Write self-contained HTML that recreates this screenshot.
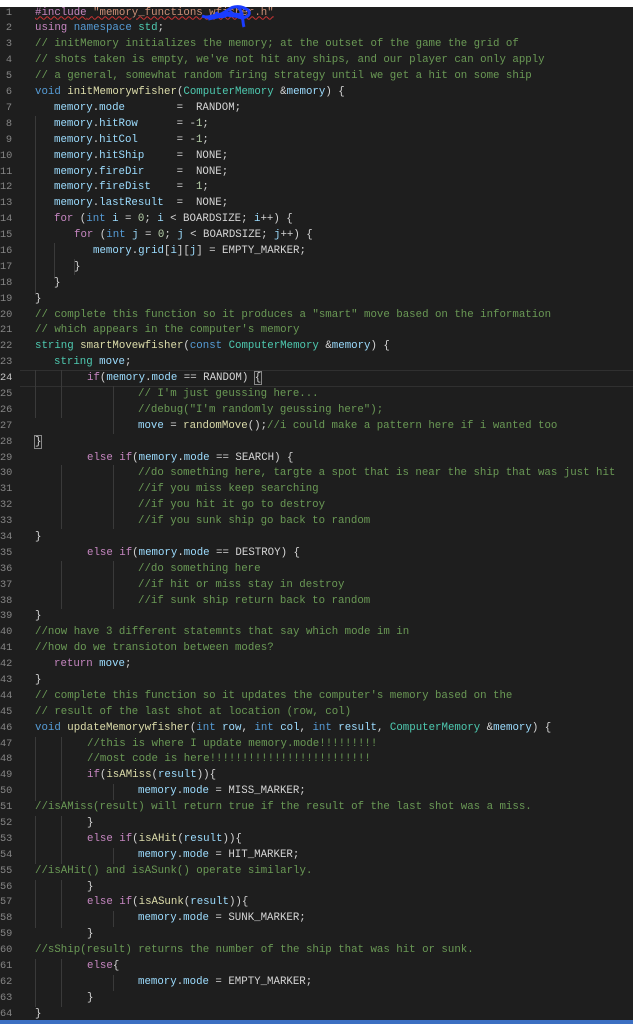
<!DOCTYPE html>
<html><head><meta charset="utf-8"><style>
body{margin:0;width:633px;height:1024px;overflow:hidden;background:#1e1e1e;position:relative;font-family:"Liberation Mono",monospace;font-size:10.75px;color:#d4d4d4}
.top{position:absolute;left:0;top:0;width:633px;height:7px;background:#fff;z-index:5}
.bar{position:absolute;left:0;top:1020px;width:633px;height:4px;background:#3c6fc2;z-index:5}
.code{position:absolute;left:0;top:5.6px;width:633px}
.l{height:15.9px;line-height:15.9px;white-space:pre;position:relative}
.n{position:absolute;left:0;width:12px;text-align:right;color:#858585;font-size:10.3px}
.k{color:#569cd6}.c{color:#c586c0}.t{color:#4ec9b0}.v{color:#9cdcfe}.f{color:#dcdcaa}.m{color:#6a9955}.s{color:#ce9178}.u{color:#b5cea8}
.g{position:absolute;width:1px;background:#3a3a3a}
.hl{position:absolute;left:20px;top:370px;width:613px;height:15px;border-top:1px solid #303030;border-bottom:1px solid #303030}
.sq{text-decoration:underline wavy #c33;text-decoration-thickness:1px}
</style></head><body>
<div class="top"></div>
<div class="hl"></div>
<div class="g" style="left:35px;top:116px;height:179px"></div>
<div class="g" style="left:54px;top:243px;height:36px"></div>
<div class="g" style="left:74px;top:259px;height:16px"></div>
<div class="g" style="left:35px;top:370px;height:48px"></div>
<div class="g" style="left:61px;top:370px;height:48px"></div>
<div class="g" style="left:113px;top:386px;height:48px"></div>
<div class="g" style="left:61px;top:465px;height:64px"></div>
<div class="g" style="left:113px;top:465px;height:64px"></div>
<div class="g" style="left:61px;top:561px;height:48px"></div>
<div class="g" style="left:113px;top:561px;height:48px"></div>
<div class="g" style="left:35px;top:737px;height:64px"></div>
<div class="g" style="left:61px;top:737px;height:64px"></div>
<div class="g" style="left:113px;top:784px;height:16px"></div>
<div class="g" style="left:35px;top:816px;height:48px"></div>
<div class="g" style="left:61px;top:816px;height:48px"></div>
<div class="g" style="left:113px;top:848px;height:16px"></div>
<div class="g" style="left:35px;top:880px;height:48px"></div>
<div class="g" style="left:61px;top:880px;height:48px"></div>
<div class="g" style="left:113px;top:911px;height:16px"></div>
<div class="g" style="left:35px;top:959px;height:48px"></div>
<div class="g" style="left:61px;top:959px;height:48px"></div>
<div class="g" style="left:113px;top:975px;height:16px"></div>
<svg style="position:absolute;left:198px;top:1px;z-index:6" width="62" height="28"><path d="M4 15 C14 19 24 13 30 9 C36 4 44 5 50 9 C54 14 48 18 40 16 M18 11 C22 20 30 14 34 10 M40 6 C46 12 44 20 46 26" stroke="#1a3cff" stroke-width="3" fill="none"/><path d="M10 17 L28 13 L44 15" stroke="#1a3cff" stroke-width="5" fill="none"/></svg>
<div class="code">
<div class="l"><span class="n">1</span><span style="position:absolute;left:35px"><span class="c sq">#include</span><span class="sq"> </span><span class="s sq">"memory_functions_wfisher.h"</span></span></div>
<div class="l"><span class="n">2</span><span style="position:absolute;left:35px"><span class="c">using</span> <span class="k">namespace</span> <span class="t">std</span>;</span></div>
<div class="l"><span class="n">3</span><span style="position:absolute;left:35px" class="m">// initMemory initializes the memory; at the outset of the game the grid of</span></div>
<div class="l"><span class="n">4</span><span style="position:absolute;left:35px" class="m">// shots taken is empty, we've not hit any ships, and our player can only apply</span></div>
<div class="l"><span class="n">5</span><span style="position:absolute;left:35px" class="m">// a general, somewhat random firing strategy until we get a hit on some ship</span></div>
<div class="l"><span class="n">6</span><span style="position:absolute;left:35px"><span class="k">void</span> <span class="f">initMemorywfisher</span>(<span class="t">ComputerMemory</span> &amp;<span class="v">memory</span>) {</span></div>
<div class="l"><span class="n">7</span><span style="position:absolute;left:54px"><span class="v">memory</span>.<span class="v">mode</span>        =  RANDOM;</span></div>
<div class="l"><span class="n">8</span><span style="position:absolute;left:54px"><span class="v">memory</span>.<span class="v">hitRow</span>      = -<span class="u">1</span>;</span></div>
<div class="l"><span class="n">9</span><span style="position:absolute;left:54px"><span class="v">memory</span>.<span class="v">hitCol</span>      = -<span class="u">1</span>;</span></div>
<div class="l"><span class="n">10</span><span style="position:absolute;left:54px"><span class="v">memory</span>.<span class="v">hitShip</span>     =  NONE;</span></div>
<div class="l"><span class="n">11</span><span style="position:absolute;left:54px"><span class="v">memory</span>.<span class="v">fireDir</span>     =  NONE;</span></div>
<div class="l"><span class="n">12</span><span style="position:absolute;left:54px"><span class="v">memory</span>.<span class="v">fireDist</span>    =  <span class="u">1</span>;</span></div>
<div class="l"><span class="n">13</span><span style="position:absolute;left:54px"><span class="v">memory</span>.<span class="v">lastResult</span>  =  NONE;</span></div>
<div class="l"><span class="n">14</span><span style="position:absolute;left:54px"><span class="c">for</span> (<span class="k">int</span> <span class="v">i</span> = <span class="u">0</span>; <span class="v">i</span> &lt; BOARDSIZE; <span class="v">i</span>++) {</span></div>
<div class="l"><span class="n">15</span><span style="position:absolute;left:74px"><span class="c">for</span> (<span class="k">int</span> <span class="v">j</span> = <span class="u">0</span>; <span class="v">j</span> &lt; BOARDSIZE; <span class="v">j</span>++) {</span></div>
<div class="l"><span class="n">16</span><span style="position:absolute;left:93px"><span class="v">memory</span>.<span class="v">grid</span>[<span class="v">i</span>][<span class="v">j</span>] = EMPTY_MARKER;</span></div>
<div class="l"><span class="n">17</span><span style="position:absolute;left:74px">}</span></div>
<div class="l"><span class="n">18</span><span style="position:absolute;left:54px">}</span></div>
<div class="l"><span class="n">19</span><span style="position:absolute;left:35px">}</span></div>
<div class="l"><span class="n">20</span><span style="position:absolute;left:35px" class="m">// complete this function so it produces a "smart" move based on the information</span></div>
<div class="l"><span class="n">21</span><span style="position:absolute;left:35px" class="m">// which appears in the computer's memory</span></div>
<div class="l"><span class="n">22</span><span style="position:absolute;left:35px"><span class="t">string</span> <span class="f">smartMovewfisher</span>(<span class="k">const</span> <span class="t">ComputerMemory</span> &amp;<span class="v">memory</span>) {</span></div>
<div class="l"><span class="n">23</span><span style="position:absolute;left:54px"><span class="t">string</span> <span class="v">move</span>;</span></div>
<div class="l"><span class="n" style="color:#c6c6c6">24</span><span style="position:absolute;left:87px"><span class="c">if</span>(<span class="v">memory</span>.<span class="v">mode</span> == RANDOM) <span style="outline:1px solid #888">{</span></span></div>
<div class="l"><span class="n">25</span><span style="position:absolute;left:138px" class="m">// I'm just geussing here...</span></div>
<div class="l"><span class="n">26</span><span style="position:absolute;left:138px" class="m">//debug("I'm randomly geussing here");</span></div>
<div class="l"><span class="n">27</span><span style="position:absolute;left:138px"><span class="v">move</span> = <span class="f">randomMove</span>();<span class="m">//i could make a pattern here if i wanted too</span></span></div>
<div class="l"><span class="n">28</span><span style="position:absolute;left:35px"><span style="outline:1px solid #888">}</span></span></div>
<div class="l"><span class="n">29</span><span style="position:absolute;left:87px"><span class="c">else</span> <span class="c">if</span>(<span class="v">memory</span>.<span class="v">mode</span> == SEARCH) {</span></div>
<div class="l"><span class="n">30</span><span style="position:absolute;left:138px" class="m">//do something here, targte a spot that is near the ship that was just hit</span></div>
<div class="l"><span class="n">31</span><span style="position:absolute;left:138px" class="m">//if you miss keep searching</span></div>
<div class="l"><span class="n">32</span><span style="position:absolute;left:138px" class="m">//if you hit it go to destroy</span></div>
<div class="l"><span class="n">33</span><span style="position:absolute;left:138px" class="m">//if you sunk ship go back to random</span></div>
<div class="l"><span class="n">34</span><span style="position:absolute;left:35px">}</span></div>
<div class="l"><span class="n">35</span><span style="position:absolute;left:87px"><span class="c">else</span> <span class="c">if</span>(<span class="v">memory</span>.<span class="v">mode</span> == DESTROY) {</span></div>
<div class="l"><span class="n">36</span><span style="position:absolute;left:138px" class="m">//do something here</span></div>
<div class="l"><span class="n">37</span><span style="position:absolute;left:138px" class="m">//if hit or miss stay in destroy</span></div>
<div class="l"><span class="n">38</span><span style="position:absolute;left:138px" class="m">//if sunk ship return back to random</span></div>
<div class="l"><span class="n">39</span><span style="position:absolute;left:35px">}</span></div>
<div class="l"><span class="n">40</span><span style="position:absolute;left:35px" class="m">//now have 3 different statemnts that say which mode im in</span></div>
<div class="l"><span class="n">41</span><span style="position:absolute;left:35px" class="m">//how do we transioton between modes?</span></div>
<div class="l"><span class="n">42</span><span style="position:absolute;left:54px"><span class="c">return</span> <span class="v">move</span>;</span></div>
<div class="l"><span class="n">43</span><span style="position:absolute;left:35px">}</span></div>
<div class="l"><span class="n">44</span><span style="position:absolute;left:35px" class="m">// complete this function so it updates the computer's memory based on the</span></div>
<div class="l"><span class="n">45</span><span style="position:absolute;left:35px" class="m">// result of the last shot at location (row, col)</span></div>
<div class="l"><span class="n">46</span><span style="position:absolute;left:35px"><span class="k">void</span> <span class="f">updateMemorywfisher</span>(<span class="k">int</span> <span class="v">row</span>, <span class="k">int</span> <span class="v">col</span>, <span class="k">int</span> <span class="v">result</span>, <span class="t">ComputerMemory</span> &amp;<span class="v">memory</span>) {</span></div>
<div class="l"><span class="n">47</span><span style="position:absolute;left:87px" class="m">//this is where I update memory.mode!!!!!!!!!</span></div>
<div class="l"><span class="n">48</span><span style="position:absolute;left:87px" class="m">//most code is here!!!!!!!!!!!!!!!!!!!!!!!!!</span></div>
<div class="l"><span class="n">49</span><span style="position:absolute;left:87px"><span class="c">if</span>(<span class="f">isAMiss</span>(<span class="v">result</span>)){</span></div>
<div class="l"><span class="n">50</span><span style="position:absolute;left:138px"><span class="v">memory</span>.<span class="v">mode</span> = MISS_MARKER;</span></div>
<div class="l"><span class="n">51</span><span style="position:absolute;left:35px" class="m">//isAMiss(result) will return true if the result of the last shot was a miss.</span></div>
<div class="l"><span class="n">52</span><span style="position:absolute;left:87px">}</span></div>
<div class="l"><span class="n">53</span><span style="position:absolute;left:87px"><span class="c">else</span> <span class="c">if</span>(<span class="f">isAHit</span>(<span class="v">result</span>)){</span></div>
<div class="l"><span class="n">54</span><span style="position:absolute;left:138px"><span class="v">memory</span>.<span class="v">mode</span> = HIT_MARKER;</span></div>
<div class="l"><span class="n">55</span><span style="position:absolute;left:35px" class="m">//isAHit() and isASunk() operate similarly.</span></div>
<div class="l"><span class="n">56</span><span style="position:absolute;left:87px">}</span></div>
<div class="l"><span class="n">57</span><span style="position:absolute;left:87px"><span class="c">else</span> <span class="c">if</span>(<span class="f">isASunk</span>(<span class="v">result</span>)){</span></div>
<div class="l"><span class="n">58</span><span style="position:absolute;left:138px"><span class="v">memory</span>.<span class="v">mode</span> = SUNK_MARKER;</span></div>
<div class="l"><span class="n">59</span><span style="position:absolute;left:87px">}</span></div>
<div class="l"><span class="n">60</span><span style="position:absolute;left:35px" class="m">//sShip(result) returns the number of the ship that was hit or sunk.</span></div>
<div class="l"><span class="n">61</span><span style="position:absolute;left:87px"><span class="c">else</span>{</span></div>
<div class="l"><span class="n">62</span><span style="position:absolute;left:138px"><span class="v">memory</span>.<span class="v">mode</span> = EMPTY_MARKER;</span></div>
<div class="l"><span class="n">63</span><span style="position:absolute;left:87px">}</span></div>
<div class="l"><span class="n">64</span><span style="position:absolute;left:35px">}</span></div>
</div>
<div class="bar"></div>
</body></html>
